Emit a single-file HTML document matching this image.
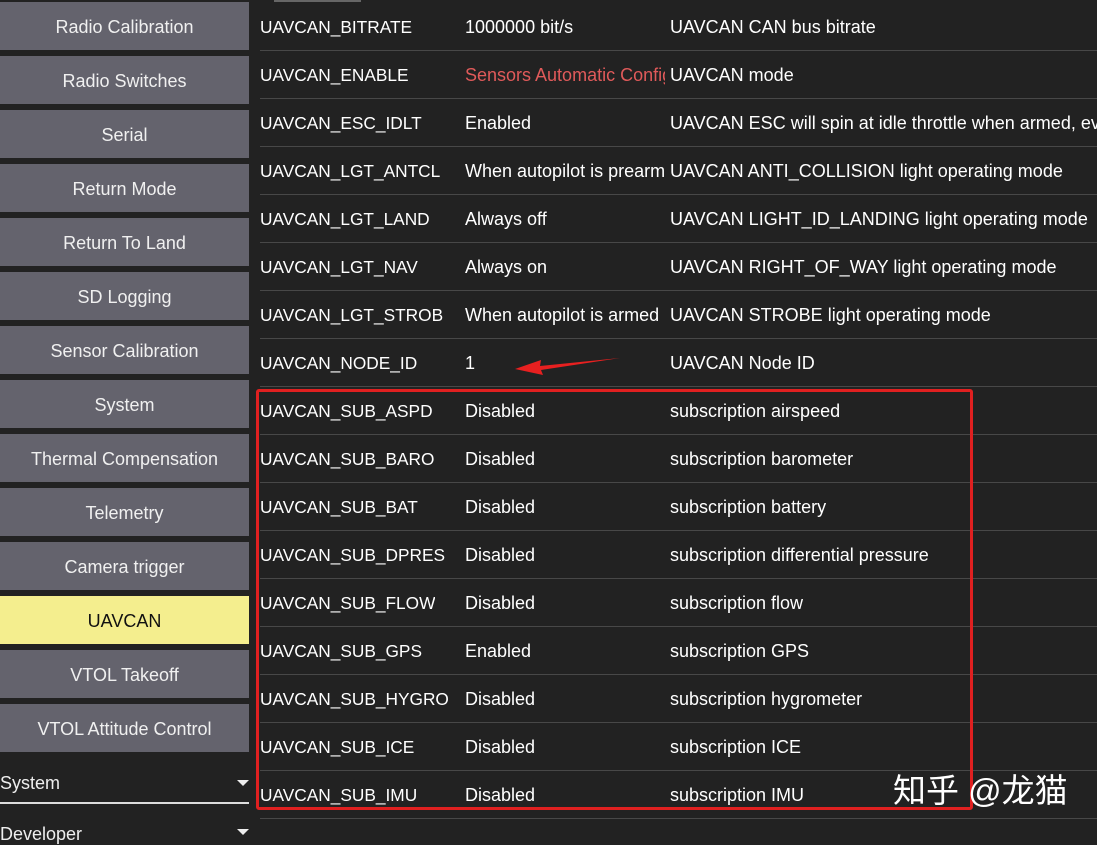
<!DOCTYPE html><html><head><style>
body{margin:0;width:1097px;height:833px;background:#222222;overflow:hidden;position:relative;font-family:"Liberation Sans","DejaVu Sans",sans-serif;color:#fff;font-size:18px}
.b{position:absolute;left:0;width:249px;height:48px;background:#64636d;color:#f0f0f0;text-align:center;line-height:50px}
.y{background:#f4ee8e;color:#111}
.r{position:absolute;left:260px;right:0;height:48px;border-bottom:1px solid #484848}
.r span{position:absolute;top:0;line-height:50px;white-space:nowrap;overflow:hidden}
.c1{left:0;font-size:17.3px}.c2{left:205px;width:200px}.c3{left:410px}
</style></head><body>
<div style="position:absolute;left:274px;top:0;width:87px;height:2px;background:#666"></div>
<div class="b" style="top:2px">Radio Calibration</div>
<div class="b" style="top:56px">Radio Switches</div>
<div class="b" style="top:110px">Serial</div>
<div class="b" style="top:164px">Return Mode</div>
<div class="b" style="top:218px">Return To Land</div>
<div class="b" style="top:272px">SD Logging</div>
<div class="b" style="top:326px">Sensor Calibration</div>
<div class="b" style="top:380px">System</div>
<div class="b" style="top:434px">Thermal Compensation</div>
<div class="b" style="top:488px">Telemetry</div>
<div class="b" style="top:542px">Camera trigger</div>
<div class="b y" style="top:596px">UAVCAN</div>
<div class="b" style="top:650px">VTOL Takeoff</div>
<div class="b" style="top:704px">VTOL Attitude Control</div>
<div style="position:absolute;left:0;top:773px;color:#eee">System</div>
<div style="position:absolute;left:0;top:802px;width:249px;height:2px;background:#ddd"></div>
<div style="position:absolute;left:0;top:824px;color:#eee">Developer</div>
<div style="position:absolute;left:237px;top:780px;border-left:6px solid transparent;border-right:6px solid transparent;border-top:6px solid #eee"></div>
<div style="position:absolute;left:237px;top:829px;border-left:6px solid transparent;border-right:6px solid transparent;border-top:6px solid #eee"></div>

<div class="r" style="top:2px"><span class="c1">UAVCAN_BITRATE</span><span class="c2">1000000 bit/s</span><span class="c3">UAVCAN CAN bus bitrate</span></div>
<div class="r" style="top:50px"><span class="c1">UAVCAN_ENABLE</span><span class="c2" style="color:#e05a5a">Sensors Automatic Config</span><span class="c3">UAVCAN mode</span></div>
<div class="r" style="top:98px"><span class="c1">UAVCAN_ESC_IDLT</span><span class="c2">Enabled</span><span class="c3">UAVCAN ESC will spin at idle throttle when armed, even</span></div>
<div class="r" style="top:146px"><span class="c1">UAVCAN_LGT_ANTCL</span><span class="c2">When autopilot is prearmed</span><span class="c3">UAVCAN ANTI_COLLISION light operating mode</span></div>
<div class="r" style="top:194px"><span class="c1">UAVCAN_LGT_LAND</span><span class="c2">Always off</span><span class="c3">UAVCAN LIGHT_ID_LANDING light operating mode</span></div>
<div class="r" style="top:242px"><span class="c1">UAVCAN_LGT_NAV</span><span class="c2">Always on</span><span class="c3">UAVCAN RIGHT_OF_WAY light operating mode</span></div>
<div class="r" style="top:290px"><span class="c1">UAVCAN_LGT_STROB</span><span class="c2">When autopilot is armed</span><span class="c3">UAVCAN STROBE light operating mode</span></div>
<div class="r" style="top:338px"><span class="c1">UAVCAN_NODE_ID</span><span class="c2">1</span><span class="c3">UAVCAN Node ID</span></div>
<div class="r" style="top:386px"><span class="c1">UAVCAN_SUB_ASPD</span><span class="c2">Disabled</span><span class="c3">subscription airspeed</span></div>
<div class="r" style="top:434px"><span class="c1">UAVCAN_SUB_BARO</span><span class="c2">Disabled</span><span class="c3">subscription barometer</span></div>
<div class="r" style="top:482px"><span class="c1">UAVCAN_SUB_BAT</span><span class="c2">Disabled</span><span class="c3">subscription battery</span></div>
<div class="r" style="top:530px"><span class="c1">UAVCAN_SUB_DPRES</span><span class="c2">Disabled</span><span class="c3">subscription differential pressure</span></div>
<div class="r" style="top:578px"><span class="c1">UAVCAN_SUB_FLOW</span><span class="c2">Disabled</span><span class="c3">subscription flow</span></div>
<div class="r" style="top:626px"><span class="c1">UAVCAN_SUB_GPS</span><span class="c2">Enabled</span><span class="c3">subscription GPS</span></div>
<div class="r" style="top:674px"><span class="c1">UAVCAN_SUB_HYGRO</span><span class="c2">Disabled</span><span class="c3">subscription hygrometer</span></div>
<div class="r" style="top:722px"><span class="c1">UAVCAN_SUB_ICE</span><span class="c2">Disabled</span><span class="c3">subscription ICE</span></div>
<div class="r" style="top:770px"><span class="c1">UAVCAN_SUB_IMU</span><span class="c2">Disabled</span><span class="c3">subscription IMU</span></div>

<div style="position:absolute;left:256px;top:389px;width:711px;height:415px;border:3px solid #e02020;border-radius:3px"></div>
<svg style="position:absolute;left:0;top:0" width="1097" height="833"><path d="M620 358 L540 366 L541 360 L515 369 L543 375 L541 370 Z" fill="#e82020"/></svg>
<div style="position:absolute;left:893px;top:764px;font-size:33px;font-family:'Liberation Sans','Noto Sans CJK SC',sans-serif;color:#fff">知乎 @龙猫</div>
</body></html>
